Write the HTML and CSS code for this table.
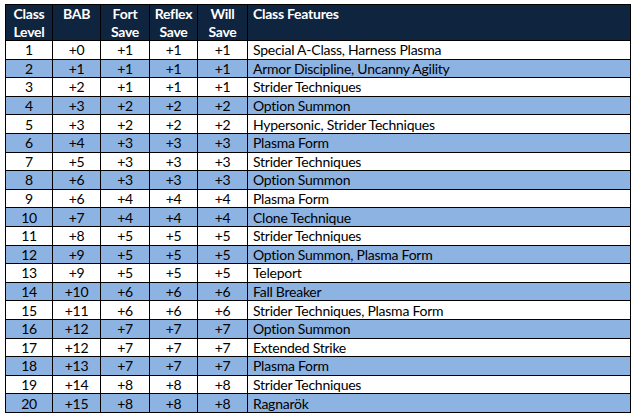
FILE: index.html
```html
<!DOCTYPE html>
<html>
<head>
<meta charset="utf-8">
<link rel="stylesheet" href="styles.css">
</head>
<body>
<table class="progression">
  <colgroup>
    <col class="c-level">
    <col class="c-bab">
    <col class="c-fort">
    <col class="c-reflex">
    <col class="c-will">
    <col class="c-feat">
  </colgroup>
  <thead>
    <tr>
      <th>Class<br>Level</th>
      <th>BAB</th>
      <th>Fort<br>Save</th>
      <th>Reflex<br>Save</th>
      <th>Will<br>Save</th>
      <th class="feat">Class Features</th>
    </tr>
  </thead>
  <tbody>
    <tr><td>1</td><td>+0</td><td>+1</td><td>+1</td><td>+1</td><td class="feat">Special A-Class, Harness Plasma</td></tr>
    <tr><td>2</td><td>+1</td><td>+1</td><td>+1</td><td>+1</td><td class="feat">Armor Discipline, Uncanny Agility</td></tr>
    <tr><td>3</td><td>+2</td><td>+1</td><td>+1</td><td>+1</td><td class="feat">Strider Techniques</td></tr>
    <tr><td>4</td><td>+3</td><td>+2</td><td>+2</td><td>+2</td><td class="feat">Option Summon</td></tr>
    <tr><td>5</td><td>+3</td><td>+2</td><td>+2</td><td>+2</td><td class="feat">Hypersonic, Strider Techniques</td></tr>
    <tr><td>6</td><td>+4</td><td>+3</td><td>+3</td><td>+3</td><td class="feat">Plasma Form</td></tr>
    <tr><td>7</td><td>+5</td><td>+3</td><td>+3</td><td>+3</td><td class="feat">Strider Techniques</td></tr>
    <tr><td>8</td><td>+6</td><td>+3</td><td>+3</td><td>+3</td><td class="feat">Option Summon</td></tr>
    <tr><td>9</td><td>+6</td><td>+4</td><td>+4</td><td>+4</td><td class="feat">Plasma Form</td></tr>
    <tr><td>10</td><td>+7</td><td>+4</td><td>+4</td><td>+4</td><td class="feat">Clone Technique</td></tr>
    <tr><td>11</td><td>+8</td><td>+5</td><td>+5</td><td>+5</td><td class="feat">Strider Techniques</td></tr>
    <tr><td>12</td><td>+9</td><td>+5</td><td>+5</td><td>+5</td><td class="feat">Option Summon, Plasma Form</td></tr>
    <tr><td>13</td><td>+9</td><td>+5</td><td>+5</td><td>+5</td><td class="feat">Teleport</td></tr>
    <tr><td>14</td><td>+10</td><td>+6</td><td>+6</td><td>+6</td><td class="feat">Fall Breaker</td></tr>
    <tr><td>15</td><td>+11</td><td>+6</td><td>+6</td><td>+6</td><td class="feat">Strider Techniques, Plasma Form</td></tr>
    <tr><td>16</td><td>+12</td><td>+7</td><td>+7</td><td>+7</td><td class="feat">Option Summon</td></tr>
    <tr><td>17</td><td>+12</td><td>+7</td><td>+7</td><td>+7</td><td class="feat">Extended Strike</td></tr>
    <tr><td>18</td><td>+13</td><td>+7</td><td>+7</td><td>+7</td><td class="feat">Plasma Form</td></tr>
    <tr><td>19</td><td>+14</td><td>+8</td><td>+8</td><td>+8</td><td class="feat">Strider Techniques</td></tr>
    <tr><td>20</td><td>+15</td><td>+8</td><td>+8</td><td>+8</td><td class="feat">Ragnarök</td></tr>
  </tbody>
</table>
</body>
</html>
```

FILE: styles.css
```css
html, body {
  margin: 0;
  padding: 0;
  background: #ffffff;
}

body {
  padding: 4px 0 0 5px;
  font-family: Lato, "Liberation Sans", sans-serif;
  font-size: 14px;
  letter-spacing: -0.25px;
  color: #000;
}

.progression {
  border-collapse: collapse;
  table-layout: fixed;
  width: 625px;
  border: 1px solid #000;
}

.c-level { width: 47px; }
.c-bab { width: 48px; }
.c-fort { width: 49px; }
.c-reflex { width: 48px; }
.c-will { width: 50px; }
.c-feat { width: 383px; }

.progression th,
.progression td {
  border: 1px solid #000;
  padding: 0;
  text-align: center;
  white-space: nowrap;
}

.progression th {
  background: #0f243e;
  color: #fff;
  font-weight: 700;
  line-height: 17.5px;
  height: 35px;
  vertical-align: top;
}

.progression td {
  height: 17.6px;
  line-height: 17px;
  vertical-align: middle;
}

.progression tbody tr:nth-child(even) td {
  background: #8db3e2;
}

.progression .feat {
  text-align: left;
  padding-left: 5px;
}
```
